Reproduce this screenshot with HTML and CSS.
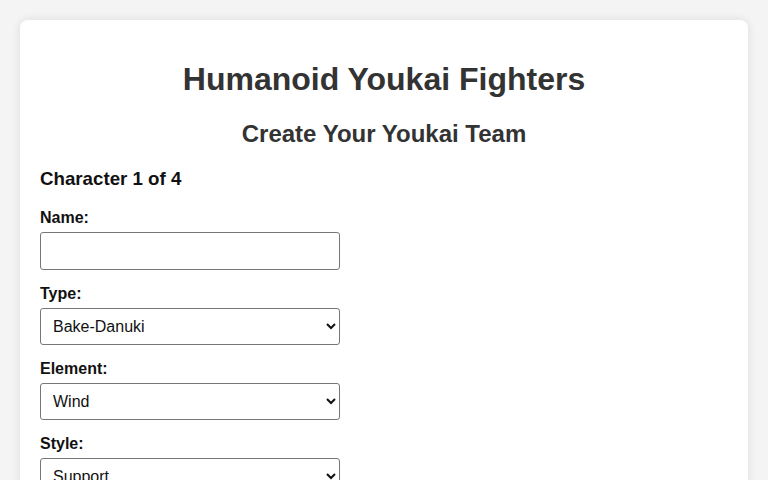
FILE: index.html
```html
<!DOCTYPE html>
<html>
<head>
<meta charset="utf-8">
<link rel="stylesheet" href="styles.css">
</head>
<body>
<div class="container">
  <h1>Humanoid Youkai Fighters</h1>
  <h2>Create Your Youkai Team</h2>
  <h3>Character 1 of 4</h3>
  <form>
    <div class="form-group">
      <label for="name">Name:</label>
      <input type="text" id="name">
    </div>
    <div class="form-group">
      <label for="type">Type:</label>
      <select id="type">
        <option>Bake-Danuki</option>
        <option>Kitsune</option>
        <option>Tengu</option>
      </select>
    </div>
    <div class="form-group">
      <label for="element">Element:</label>
      <select id="element">
        <option>Wind</option>
        <option>Fire</option>
        <option>Water</option>
      </select>
    </div>
    <div class="form-group">
      <label for="style">Style:</label>
      <select id="style">
        <option>Support</option>
        <option>Attack</option>
        <option>Defense</option>
      </select>
    </div>
  </form>
</div>
</body>
</html>
```
FILE: styles.css
```css
html, body {
  margin: 0;
}
body {
  background: #f4f4f4;
  font-family: "Liberation Sans", Arial, sans-serif;
  color: #111;
  padding: 20px;
}
.container {
  background: #fff;
  border-radius: 8px;
  box-shadow: 0 0 10px rgba(0, 0, 0, 0.1);
  padding: 20px;
  min-height: 600px;
}
h1 {
  text-align: center;
  font-size: 32px;
  color: #333;
  margin: 21px 0 22px;
}
h2 {
  text-align: center;
  font-size: 24px;
  color: #333;
  margin: 20px 0;
}
h3 {
  font-size: 18.72px;
  margin: 19px 0 18px;
}
.form-group {
  margin-bottom: 14px;
}
label {
  display: block;
  font-weight: bold;
  font-size: 16px;
  line-height: 20px;
  margin-bottom: 4px;
}
input, select {
  box-sizing: border-box;
  width: 300px;
  font-family: "Liberation Sans", Arial, sans-serif;
  font-size: 16px;
  border: 1px solid #767676;
  border-radius: 3px;
  background: #fff;
  color: #111;
}
input {
  height: 38px;
  padding: 8px;
}
select {
  height: 37px;
  padding: 8px 8px;
}
```
